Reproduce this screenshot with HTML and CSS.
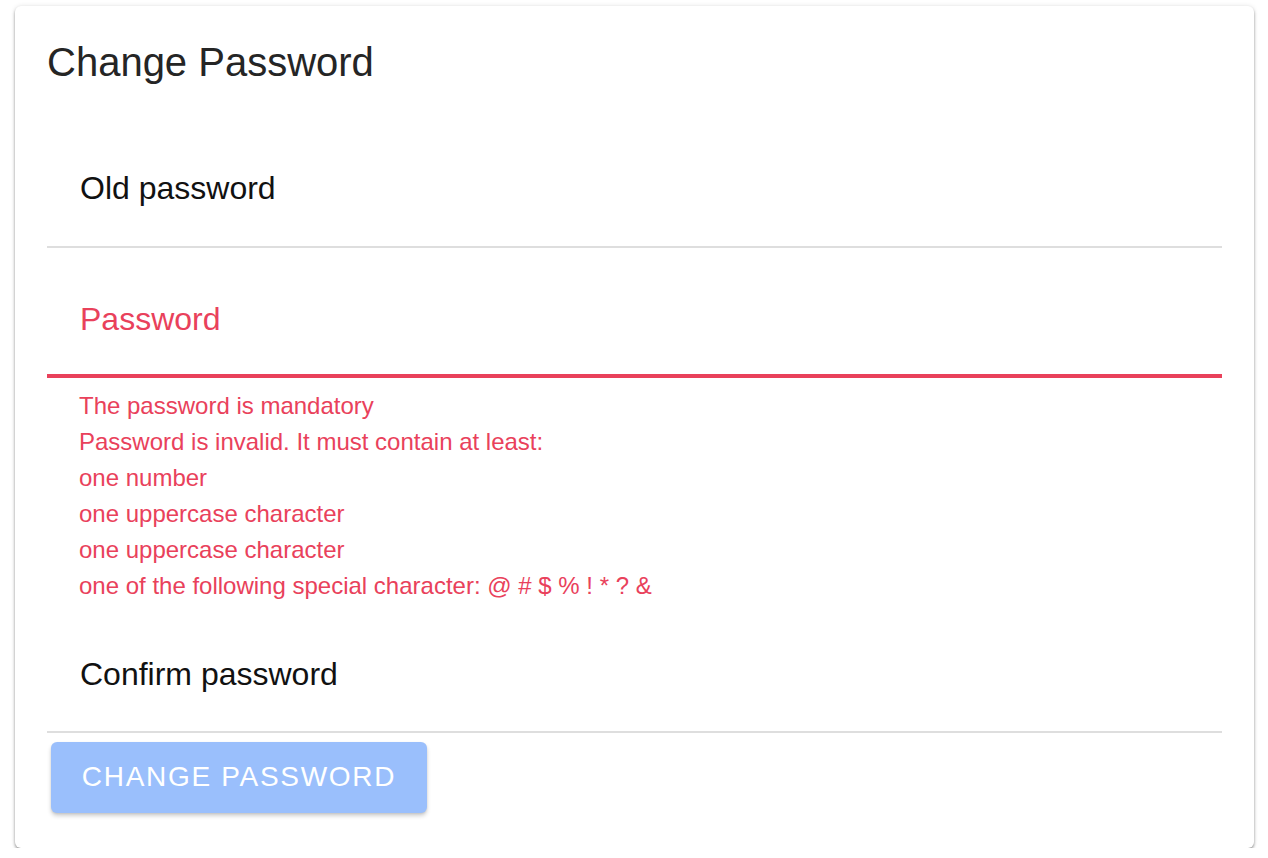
FILE: index.html
```html
<!DOCTYPE html>
<html lang="en">
<head>
<meta charset="utf-8">
<title>Change Password</title>
<link rel="stylesheet" href="styles.css">
</head>
<body>
  <form class="card">
    <h1 class="card-title">Change Password</h1>
    <label class="field">
      <span class="field-label">Old password</span>
    </label>
    <label class="field field-error">
      <span class="field-label">Password</span>
    </label>
    <div class="errors">
      <div>The password is mandatory</div>
      <div>Password is invalid. It must contain at least:</div>
      <div>one number</div>
      <div>one uppercase character</div>
      <div>one uppercase character</div>
      <div>one of the following special character: @ # $ % ! * ? &amp;</div>
    </div>
    <label class="field field-last">
      <span class="field-label">Confirm password</span>
    </label>
    <div class="actions">
      <button type="button" class="btn" disabled>Change Password</button>
    </div>
  </form>
</body>
</html>
```
FILE: styles.css
```css
html, body {
  margin: 0;
  background: #ffffff;
}
body {
  padding: 6px 14px 0 15px;
  font-family: "Liberation Sans", Arial, sans-serif;
}
.card {
  display: flex;
  flex-direction: column;
  padding: 32px 32px 32px 32px;
  background: #ffffff;
  border-radius: 6px;
  box-shadow: 0 2px 3px rgba(0, 0, 0, 0.38), 0 0 5px rgba(0, 0, 0, 0.1);
}
.card-title {
  margin: 0 0 30px 0;
  font-size: 40px;
  line-height: 48px;
  font-weight: 400;
  color: #252525;
}
.field {
  display: block;
  padding: 48px 32px 34px 33px;
  border-bottom: 2px solid #dedede;
  font-size: 32px;
  line-height: 48px;
  color: #111111;
}
.field-error {
  padding-top: 47px;
  padding-bottom: 31px;
  border-bottom: 4px solid #e9415b;
  color: #e9415b;
}
.field-last {
  padding-top: 46px;
  padding-bottom: 33px;
}
.errors {
  margin-top: 10px;
  padding-left: 32px;
  font-size: 24px;
  line-height: 36px;
  color: #e9415b;
}
.actions {
  display: flex;
  padding: 9px 4px 3px 4px;
}
.btn {
  width: 376px;
  height: 71px;
  padding: 0 0 2px 0;
  border: none;
  border-radius: 6px;
  background: #9abffc;
  color: #ffffff;
  font-family: "Liberation Sans", Arial, sans-serif;
  font-size: 28px;
  letter-spacing: 1.7px;
  text-transform: uppercase;
  box-shadow: 0 3px 4px rgba(0, 0, 0, 0.18), 0 1px 2px rgba(0, 0, 0, 0.08);
}
```
